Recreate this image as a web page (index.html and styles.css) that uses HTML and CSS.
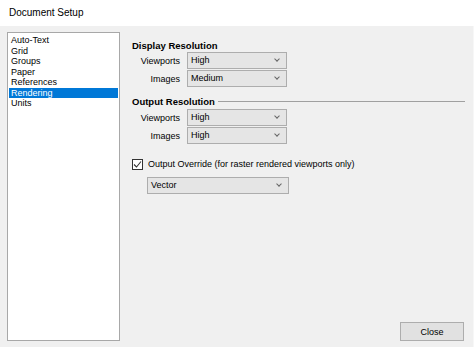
FILE: index.html
```html
<!DOCTYPE html>
<html lang="en">
<head>
    <meta charset="UTF-8">
    <title>Document Setup</title>
    <link rel="stylesheet" href="styles.css">
</head>
<body>
    <div class="titlebar">Document Setup</div>
    <div class="dialog">
        <ul class="nav-list">
            <li>Auto-Text</li>
            <li>Grid</li>
            <li>Groups</li>
            <li>Paper</li>
            <li>References</li>
            <li class="selected">Rendering</li>
            <li>Units</li>
        </ul>
        <div class="content">
            <div class="group">
                <div class="group-title">Display Resolution</div>
                <div class="field">
                    <label>Viewports</label>
                    <div class="combo">High</div>
                </div>
                <div class="field">
                    <label>Images</label>
                    <div class="combo">Medium</div>
                </div>
            </div>
            <div class="group">
                <div class="group-title lined">Output Resolution</div>
                <div class="field">
                    <label>Viewports</label>
                    <div class="combo">High</div>
                </div>
                <div class="field">
                    <label>Images</label>
                    <div class="combo">High</div>
                </div>
            </div>
            <div class="check-row">
                <span class="checkbox">
                    <svg width="9" height="9" viewBox="0 0 9 9"><path d="M1 4.5 L3.5 7 L8 1.5" fill="none" stroke="#333" stroke-width="1.1"/></svg>
                </span>
                Output Override (for raster rendered viewports only)
            </div>
            <div class="combo wide">Vector</div>
            <div class="buttons">
                <button class="close-btn">Close</button>
            </div>
        </div>
    </div>
</body>
</html>
```

FILE: styles.css
```css
body {
    margin: 0;
    font-family: "Liberation Sans", Arial, sans-serif;
    font-size: 9px;
    color: #000;
    background: #fff;
}

.titlebar {
    height: 26px;
    line-height: 26px;
    padding-left: 9px;
    font-size: 10px;
    background: #fff;
}

.dialog {
    display: flex;
    height: 317px;
    padding: 6px 0 0 7px;
    background: #f0f0f0;
    border-right: 1px solid #f7f7f7;
}

.nav-list {
    list-style: none;
    margin: 0;
    padding: 2px 1px;
    width: 109px;
    height: 303px;
    background: #fff;
    border: 1px solid #a8a8a8;
}

.nav-list li {
    height: 10.5px;
    line-height: 10.5px;
    padding-left: 2px;
}

.nav-list li.selected {
    background: #0078d7;
    color: #fff;
}

.content {
    flex: 1;
    display: flex;
    flex-direction: column;
    padding: 7px 0 0 12px;
}

.group {
    margin-bottom: 7px;
}

.group-title {
    display: flex;
    align-items: center;
    font-weight: bold;
    font-size: 9.5px;
    height: 12px;
    margin-bottom: 1px;
}

.group-title.lined {
    margin-bottom: 2px;
}

.group-title.lined::after {
    content: "";
    flex: 1;
    height: 1px;
    margin-left: 3px;
    margin-right: 8px;
    background: #a0a0a0;
}

.field {
    display: flex;
    align-items: center;
    margin-bottom: 1px;
}

.field label {
    width: 48px;
    text-align: right;
    padding-right: 7px;
}

.combo {
    position: relative;
    width: 95px;
    height: 15px;
    line-height: 15px;
    padding-left: 3px;
    background: #e5e5e5;
    border: 1px solid #adadad;
}

.combo::after {
    content: "";
    position: absolute;
    right: 7px;
    top: 4px;
    width: 3px;
    height: 3px;
    border-right: 1px solid #666;
    border-bottom: 1px solid #666;
    transform: rotate(45deg);
}

.combo.wide {
    width: 137px;
    margin-left: 15px;
}

.check-row {
    display: flex;
    align-items: center;
    height: 12px;
    margin: 6px 0 7px;
}

.checkbox {
    display: inline-flex;
    align-items: center;
    justify-content: center;
    width: 11px;
    height: 11px;
    box-sizing: border-box;
    border: 1px solid #333;
    background: #fff;
    margin-right: 5px;
}

.buttons {
    margin-top: auto;
    display: flex;
    justify-content: flex-end;
    padding: 0 9px 8px 0;
}

.close-btn {
    width: 64px;
    height: 19px;
    font-family: inherit;
    font-size: 9px;
    background: #e1e1e1;
    border: 1px solid #adadad;
    padding: 0;
}
```
